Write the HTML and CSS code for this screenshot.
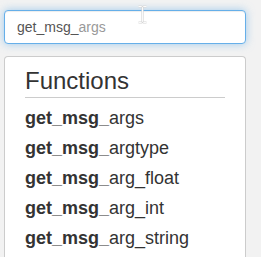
FILE: index.html
```html
<!DOCTYPE html>
<html>
<head>
<meta charset="utf-8">
<link rel="stylesheet" href="styles.css">
</head>
<body>
<div class="page">
  <div class="search"><span class="typed">get_msg_</span><span class="hint">args</span></div>
  <div class="panel">
    <h2 class="title">Functions</h2>
    <ul class="list">
      <li><b>get_msg_</b>args</li>
      <li><b>get_msg_</b>argtype</li>
      <li><b>get_msg_</b>arg_float</li>
      <li><b>get_msg_</b>arg_int</li>
      <li><b>get_msg_</b>arg_string</li>
    </ul>
  </div>
</div>
<svg class="cursor" width="11" height="19" viewBox="0 0 11 19"><path d="M1.5 1.5h3l1 1 1-1h3M5.5 2.5v14M1.5 17.5h3l1-1 1 1h3" fill="none" stroke="#d6d6d6" stroke-width="2.2"/><path d="M1.5 1.5h3l1 1 1-1h3M5.5 2.5v14M1.5 17.5h3l1-1 1 1h3" fill="none" stroke="#fafafa" stroke-width="1"/></svg>
</body>
</html>
```
FILE: styles.css
```css
html, body {
  margin: 0;
  padding: 0;
  background: #f2f2f2;
  font-family: "Liberation Sans", Arial, sans-serif;
  color: #333;
  overflow: hidden;
}
.page {
  padding: 10px 15px 0 4px;
  display: flex;
  flex-direction: column;
  gap: 12px;
  width: 242px;
  height: 247px;
}
.search {
  height: 34px;
  flex: none;
  box-sizing: border-box;
  border: 1px solid #66afe9;
  border-radius: 4px;
  background: #fff;
  box-shadow: inset 0 1px 1px rgba(0,0,0,.075), 0 0 8px rgba(102,175,233,.6);
  padding: 0 12px;
  font-size: 14px;
  line-height: 32px;
  white-space: nowrap;
}
.typed { color: #555; }
.hint { color: #999; }
.panel {
  background: #fff;
  border: 1px solid #ccc;
  border-bottom: none;
  border-radius: 4px 4px 0 0;
  padding: 10px 20px 0 20px;
  flex: 1;
}
.title {
  margin: 0;
  font-size: 24px;
  font-weight: normal;
  line-height: 28px;
  color: #333;
  padding-bottom: 2px;
  border-bottom: 1px solid #ccc;
  width: 200px;
}
.list {
  list-style: none;
  margin: 5px 0 0;
  padding: 0;
  font-size: 18px;
  line-height: 30px;
  color: #333;
}
.list b { font-weight: bold; }
.cursor {
  position: absolute;
  left: 137px;
  top: 5px;
}
```
